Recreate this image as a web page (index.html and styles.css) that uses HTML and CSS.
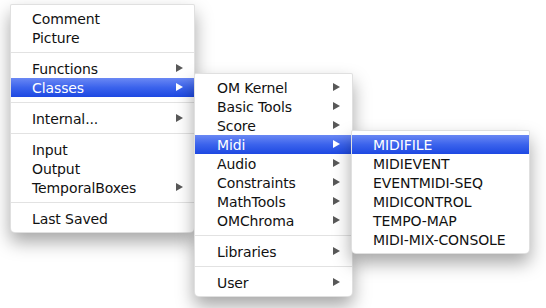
FILE: index.html
```html
<!DOCTYPE html>
<html lang="en">
<head>
<meta charset="UTF-8">
<title>Menus</title>
<link rel="stylesheet" href="styles.css">
</head>
<body>
<div class="desk">
    <div class="menu menu-main">
        <div class="item">Comment</div>
        <div class="item">Picture</div>
        <div class="sep"></div>
        <div class="item sub">Functions</div>
        <div class="item sub active">Classes</div>
        <div class="sep"></div>
        <div class="item sub">Internal...</div>
        <div class="sep"></div>
        <div class="item">Input</div>
        <div class="item">Output</div>
        <div class="item sub">TemporalBoxes</div>
        <div class="sep"></div>
        <div class="item">Last Saved</div>
    </div>

    <div class="menu menu-classes">
        <div class="item sub">OM Kernel</div>
        <div class="item sub">Basic Tools</div>
        <div class="item sub">Score</div>
        <div class="item sub active">Midi</div>
        <div class="item sub">Audio</div>
        <div class="item sub">Constraints</div>
        <div class="item sub">MathTools</div>
        <div class="item sub">OMChroma</div>
        <div class="sep"></div>
        <div class="item sub">Libraries</div>
        <div class="sep"></div>
        <div class="item sub">User</div>
    </div>

    <div class="menu menu-midi">
        <div class="item active">MIDIFILE</div>
        <div class="item">MIDIEVENT</div>
        <div class="item">EVENTMIDI-SEQ</div>
        <div class="item">MIDICONTROL</div>
        <div class="item">TEMPO-MAP</div>
        <div class="item">MIDI-MIX-CONSOLE</div>
    </div>
</div>
</body>
</html>
```
FILE: styles.css
```css
body {
    margin: 0;
    background: #fff;
    font-family: 'DejaVu Sans', 'Verdana', sans-serif;
    font-size: 14px;
    letter-spacing: -0.1px;
    color: #111;
}

.desk {
    position: relative;
    width: 546px;
    height: 308px;
    overflow: hidden;
}

/* cascading menus overlap each other, so they sit on the canvas */
.menu {
    position: absolute;
    background: #fff;
    padding: 4px 0;
    border: 1px solid rgba(0,0,0,0.12);
    border-radius: 2px 2px 5px 5px;
    box-shadow: 0 9px 18px rgba(0,0,0,0.35);
}

.menu-main {
    left: 10px;
    top: 4px;
    width: 183px;
}

.menu-classes {
    left: 194px;
    top: 73px;
    width: 157px;
}

.menu-midi {
    left: 351px;
    top: 130px;
    width: 177px;
}

.item {
    position: relative;
    height: 19px;
    line-height: 20px;
    padding-left: 21px;
    white-space: nowrap;
}

.menu-classes .item {
    padding-left: 22px;
}

.item.sub::after {
    content: '';
    position: absolute;
    right: 11px;
    top: 5px;
    border-style: solid;
    border-width: 4.5px 0 4.5px 7px;
    border-color: transparent transparent transparent #585858;
}

.menu-classes .item.sub::after {
    right: 12px;
}

.item.active {
    color: #fff;
    background: linear-gradient(#6a88f4, #3b63ec 50%, #1d48e2);
}

.item.active.sub::after {
    border-left-color: #fff;
}

.sep {
    height: 1px;
    margin: 5px 0 6px;
    background: #e2e2e2;
}
```
